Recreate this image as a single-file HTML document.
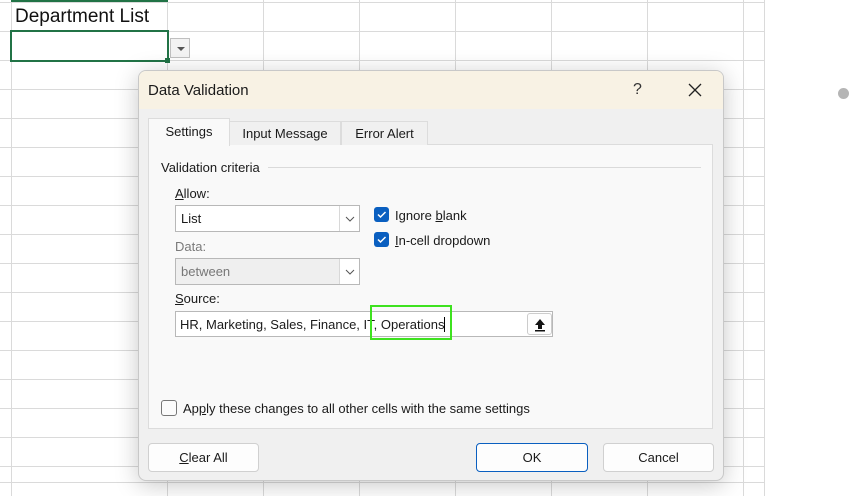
<!DOCTYPE html>
<html><head><style>
*{margin:0;padding:0;box-sizing:border-box}
body{width:850px;height:496px;background:#fff;position:relative;overflow:hidden;font-family:"Liberation Sans",sans-serif;font-size:13px;color:#1a1a1a}
.a{position:absolute}
.vl{position:absolute;top:0;height:496px;width:1px;background:#dadada}
.hl{position:absolute;left:0;width:764px;height:1px;background:#dadada}
.btn{position:absolute;height:29px;background:#fdfdfd;border:1px solid #d0d0d0;border-radius:4px;text-align:center;line-height:27px;font-size:13px}
.cb{position:absolute;width:15px;height:15px;background:#0a5fc0;border-radius:3px}
.cb svg{position:absolute;left:2px;top:2px}
.dd{position:absolute;border:1px solid #b8b8b8;height:27px}
.dd .ar{position:absolute;right:0;top:0;width:20px;height:25px;border-left:1px solid #d8d8d8;background:#fff}
</style></head><body>
<div class="vl" style="left:11px"></div><div class="vl" style="left:167px"></div><div class="vl" style="left:263px"></div><div class="vl" style="left:359px"></div><div class="vl" style="left:455px"></div><div class="vl" style="left:551px"></div><div class="vl" style="left:647px"></div><div class="vl" style="left:743px"></div><div class="vl" style="left:764px"></div>
<div class="hl" style="top:2px"></div><div class="hl" style="top:31px"></div><div class="hl" style="top:60px"></div><div class="hl" style="top:89px"></div><div class="hl" style="top:118px"></div><div class="hl" style="top:147px"></div><div class="hl" style="top:176px"></div><div class="hl" style="top:205px"></div><div class="hl" style="top:234px"></div><div class="hl" style="top:263px"></div><div class="hl" style="top:292px"></div><div class="hl" style="top:321px"></div><div class="hl" style="top:350px"></div><div class="hl" style="top:379px"></div><div class="hl" style="top:408px"></div><div class="hl" style="top:437px"></div><div class="hl" style="top:466px"></div><div class="hl" style="top:482px"></div>
<div class="a" style="left:11px;top:0;width:157px;height:2px;background:#217346"></div>
<div class="a" style="left:15px;top:6px;font-size:19px;color:#111">Department List</div>
<div class="a" style="left:10px;top:30px;width:159px;height:32px;border:2px solid #217346;background:#fff"></div>
<div class="a" style="left:165px;top:58px;width:5px;height:5px;background:#217346"></div>
<div class="a" style="left:170px;top:38px;width:20px;height:20px;border:1px solid #c0c0c0;background:#f3f3f3"><div style="position:absolute;left:6px;top:8px;border-left:4px solid transparent;border-right:4px solid transparent;border-top:4px solid #555"></div></div>
<div class="a" style="left:838px;top:88px;width:11px;height:11px;border-radius:50%;background:#b5b5b5"></div>

<div class="a" style="left:138px;top:70px;width:586px;height:411px;background:#f0f0f0;border:1px solid #c8c8c8;border-radius:8px;box-shadow:0 4px 24px rgba(0,0,0,.22);overflow:hidden">
 <div class="a" style="left:0;top:0;width:586px;height:38px;background:#f8f2e4"></div>
 <div class="a" style="left:9px;top:11px;font-size:15px">Data Validation</div>
 <div class="a" style="left:494px;top:10px;font-size:16px;color:#333">?</div>
 <svg class="a" style="left:549px;top:12px" width="14" height="14"><path d="M1 1L13 13M13 1L1 13" stroke="#222" stroke-width="1.3"/></svg>
 <div class="a" style="left:9px;top:73px;width:565px;height:285px;background:#f9f9f9;border:1px solid #dcdcdc"></div>
 <div class="a" style="left:90px;top:50px;width:112px;height:24px;border:1px solid #dcdcdc;border-bottom:none;background:#f0f0f0;text-align:center;line-height:24px">Input Message</div>
 <div class="a" style="left:202px;top:50px;width:87px;height:24px;border:1px solid #dcdcdc;border-bottom:none;background:#f0f0f0;text-align:center;line-height:24px">Error Alert</div>
 <div class="a" style="left:9px;top:47px;width:82px;height:28px;border:1px solid #dcdcdc;border-bottom:none;background:#f9f9f9;text-align:center;line-height:26px">Settings</div>
 <div class="a" style="left:22px;top:89px">Validation criteria</div>
 <div class="a" style="left:129px;top:96px;width:433px;height:1px;background:#dadada"></div>
 <div class="a" style="left:36px;top:115px"><u>A</u>llow:</div>
 <div class="dd" style="left:36px;top:134px;width:185px;background:#fff"><span class="a" style="left:5px;top:5px">List</span><div class="ar"><svg width="20" height="25"><path d="M6 11l4 4 4-4" stroke="#555" fill="none"/></svg></div></div>
 <div class="a" style="left:36px;top:168px;color:#7a7a7a">Data:</div>
 <div class="dd" style="left:36px;top:187px;width:185px;background:#efefef"><span class="a" style="left:5px;top:5px;color:#777">between</span><div class="ar"><svg width="20" height="25"><path d="M6 11l4 4 4-4" stroke="#555" fill="none"/></svg></div></div>
 <div class="cb" style="left:235px;top:136px"><svg width="11" height="11"><path d="M2 5.5l2.5 2.5 5-5" stroke="#fff" stroke-width="1.5" fill="none"/></svg></div>
 <div class="a" style="left:256px;top:137px">Ignore <u>b</u>lank</div>
 <div class="cb" style="left:235px;top:161px"><svg width="11" height="11"><path d="M2 5.5l2.5 2.5 5-5" stroke="#fff" stroke-width="1.5" fill="none"/></svg></div>
 <div class="a" style="left:256px;top:162px"><u>I</u>n-cell dropdown</div>
 <div class="a" style="left:36px;top:220px"><u>S</u>ource:</div>
 <div class="a" style="left:36px;top:240px;width:378px;height:26px;border:1px solid #b8b8b8;background:#fff"></div>
 <div class="a" style="left:41px;top:246px">HR, Marketing, Sales, Finance, IT, Operations<span style="display:inline-block;width:1px;height:15px;background:#000;vertical-align:-3px"></span></div>
 <div class="a" style="left:231px;top:234px;width:82px;height:35px;border:2px solid #3ee21f"></div>
 <div class="a" style="left:388px;top:242px;width:25px;height:22px;border:1px solid #ccc;border-radius:3px;background:#fdfdfd"><svg width="25" height="22"><path d="M12 5l-5 6h3v4h4v-4h3z" fill="#111"/><rect x="7" y="16" width="10" height="1.5" fill="#111"/></svg></div>
 <div class="a" style="left:22px;top:329px;width:16px;height:16px;border:1px solid #777;border-radius:3px;background:#fbfbfb"></div>
 <div class="a" style="left:44px;top:330px">Ap<u>p</u>ly these changes to all other cells with the same settings</div>
 <div class="btn" style="left:9px;top:372px;width:111px"><u>C</u>lear All</div>
 <div class="btn" style="left:337px;top:372px;width:112px;border:1px solid #0a5fc0">OK</div>
 <div class="btn" style="left:464px;top:372px;width:111px">Cancel</div>
</div>
</body></html>
